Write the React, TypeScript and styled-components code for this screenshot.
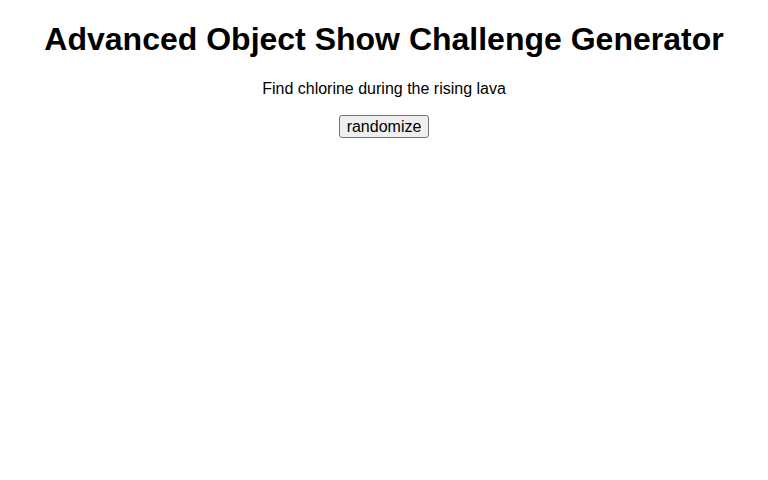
import { useState } from 'react';
import styled, { createGlobalStyle } from 'styled-components';

const challenges = ['Find chlorine during the rising lava'];

export default function App() {
  const [challenge, setChallenge] = useState(challenges[0]);

  const randomize = () => {
    setChallenge(challenges[Math.floor(Math.random() * challenges.length)]);
  };

  return (
    <Container>
      <GlobalStyle />
      <Title>Advanced Object Show Challenge Generator</Title>
      <Challenge>{challenge}</Challenge>
      <Button onClick={randomize}>randomize</Button>
    </Container>
  );
}

const GlobalStyle = createGlobalStyle`
  body {
    margin: 0;
    background: #fff;
    color: #000;
    font-family: "Liberation Sans", Arial, sans-serif;
  }
`;

const Container = styled.div`
  display: flex;
  flex-direction: column;
  align-items: center;
  text-align: center;
`;

const Title = styled.h1`
  margin: 21.44px 0;
  font-size: 32px;
  font-weight: bold;
`;

const Challenge = styled.p`
  margin: 0 0 16px;
  font-size: 16px;
`;

const Button = styled.button`
  box-sizing: border-box;
  width: 90px;
  height: 23px;
  margin-top: 1px;
  padding: 0 6px;
  font-family: "Liberation Sans", Arial, sans-serif;
  font-size: 16px;
  line-height: 19px;
  color: #000;
  background: #efefef;
  border: 1px solid #767676;
  border-radius: 3px;
  cursor: pointer;
`;
